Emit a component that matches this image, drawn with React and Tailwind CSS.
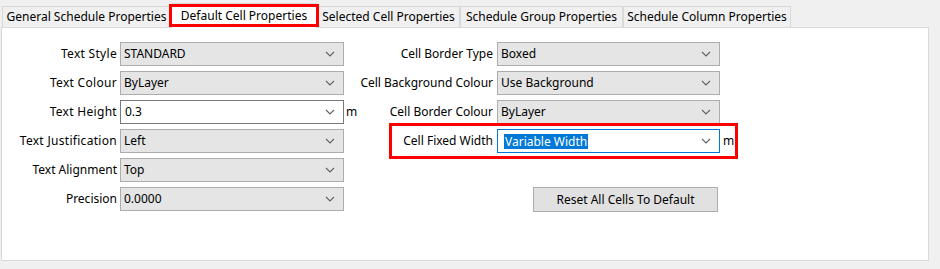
import React from "react";

const font = { fontFamily: '"Noto Sans", "Open Sans", sans-serif' };

function Chevron() {
  return (
    <svg width="10" height="6" viewBox="0 0 10 6" className="shrink-0">
      <polyline points="1,1 5,5 9,1" fill="none" stroke="#606060" strokeWidth="1.1" />
    </svg>
  );
}

function Combo({ value, width = "w-[224px]", editable = false, focused = false }) {
  const base = editable
    ? focused
      ? "bg-white border-[#0078d7]"
      : "bg-white border-[#7a7a7a]"
    : "bg-[#e5e5e5] border-[#adadad]";
  return (
    <div className={`${width} h-[24px] border ${base} flex items-center justify-between pl-[3px] pr-[8px] shrink-0`}>
      {focused ? (
        <span className="ml-[3px] bg-[#0078d7] text-white leading-[15px] h-[15px] px-[1px]">{value}</span>
      ) : (
        <span className={editable ? "pl-[1px]" : ""}>{value}</span>
      )}
      <Chevron />
    </div>
  );
}

function Tab({ label, width, selected }) {
  if (selected) {
    return (
      <div className="relative">
        <div className={`${width} h-[25px] bg-white border border-b-0 border-[#d9d9d9] flex items-center justify-center -mt-[2px] mb-[-1px] relative z-10 whitespace-nowrap`}>
          {label}
        </div>
        <div className="absolute left-[-2px] right-[-2px] top-[-1px] bottom-[0px] border-[3px] border-[#ff0000] z-20 pointer-events-none"></div>
      </div>
    );
  }
  return (
    <div className={`${width} h-[21px] bg-[#f0f0f0] border border-b-0 border-[#d9d9d9] flex items-center justify-center whitespace-nowrap`}>
      {label}
    </div>
  );
}

function Label({ children, width, wide }) {
  return (
    <span className={`${width} text-right shrink-0 whitespace-nowrap ${wide ? "tracking-[0.3px]" : ""}`}>
      {children}
    </span>
  );
}

export default function App() {
  const rows = [
    { l: "Text Style", wide: true, lv: "STANDARD", r: "Cell Border Type", rv: "Boxed" },
    { l: "Text Colour", wide: true, lv: "ByLayer", r: "Cell Background Colour", rv: "Use Background" },
    { l: "Text Height", wide: true, lv: "0.3", lEdit: true, lm: true, r: "Cell Border Colour", rv: "ByLayer" },
    { l: "Text Justification", wide: true, lv: "Left", r: "Cell Fixed Width", rv: "Variable Width", rFocus: true },
    { l: "Text Alignment", lv: "Top" },
    { l: "Precision", lv: "0.0000", button: true },
  ];
  return (
    <div className="w-[940px] h-[269px] bg-[#f0f0f0] text-[12px] text-black overflow-hidden" style={font}>
      <div className="flex items-end pl-[2px] pt-[6px] h-[27px]">
        <Tab label="General Schedule Properties" width="w-[169px]" />
        <Tab label="Default Cell Properties" width="w-[146px]" selected />
        <Tab label="Selected Cell Properties" width="w-[143px]" />
        <Tab label="Schedule Group Properties" width="w-[163px]" />
        <Tab label="Schedule Column Properties" width="w-[168px]" />
      </div>
      <div className="ml-[1px] w-[928px] h-[234px] bg-white border border-[#d9d9d9] pt-[14px] pl-[1px] flex flex-col gap-[5px]">
        {rows.map((row, i) => (
          <div key={i} className="flex items-center h-[24px]">
            <Label width="w-[114px]" wide={row.wide}>{row.l}</Label>
            <div className="ml-[3px]">
              <Combo value={row.lv} editable={row.lEdit} />
            </div>
            <span className="w-[9px] ml-[2px] shrink-0">{row.lm ? "m" : ""}</span>
            {row.r ? (
              <div className="relative flex items-center">
                <Label width="w-[138px]">{row.r}</Label>
                <div className="ml-[4px]">
                  <Combo value={row.rv} width="w-[223px]" editable={row.rFocus} focused={row.rFocus} />
                </div>
                {row.rFocus && <span className="ml-[3px]">m</span>}
                {row.rFocus && (
                  <div className="absolute left-[34px] top-[-6px] w-[349px] h-[36px] border-[3px] border-[#ff0000] pointer-events-none"></div>
                )}
              </div>
            ) : null}
            {row.button && (
              <button className="ml-[178px] w-[185px] h-[25px] bg-[#e1e1e1] border border-[#adadad] flex items-center justify-center mt-[1px]">
                Reset All Cells To Default
              </button>
            )}
          </div>
        ))}
      </div>
    </div>
  );
}
